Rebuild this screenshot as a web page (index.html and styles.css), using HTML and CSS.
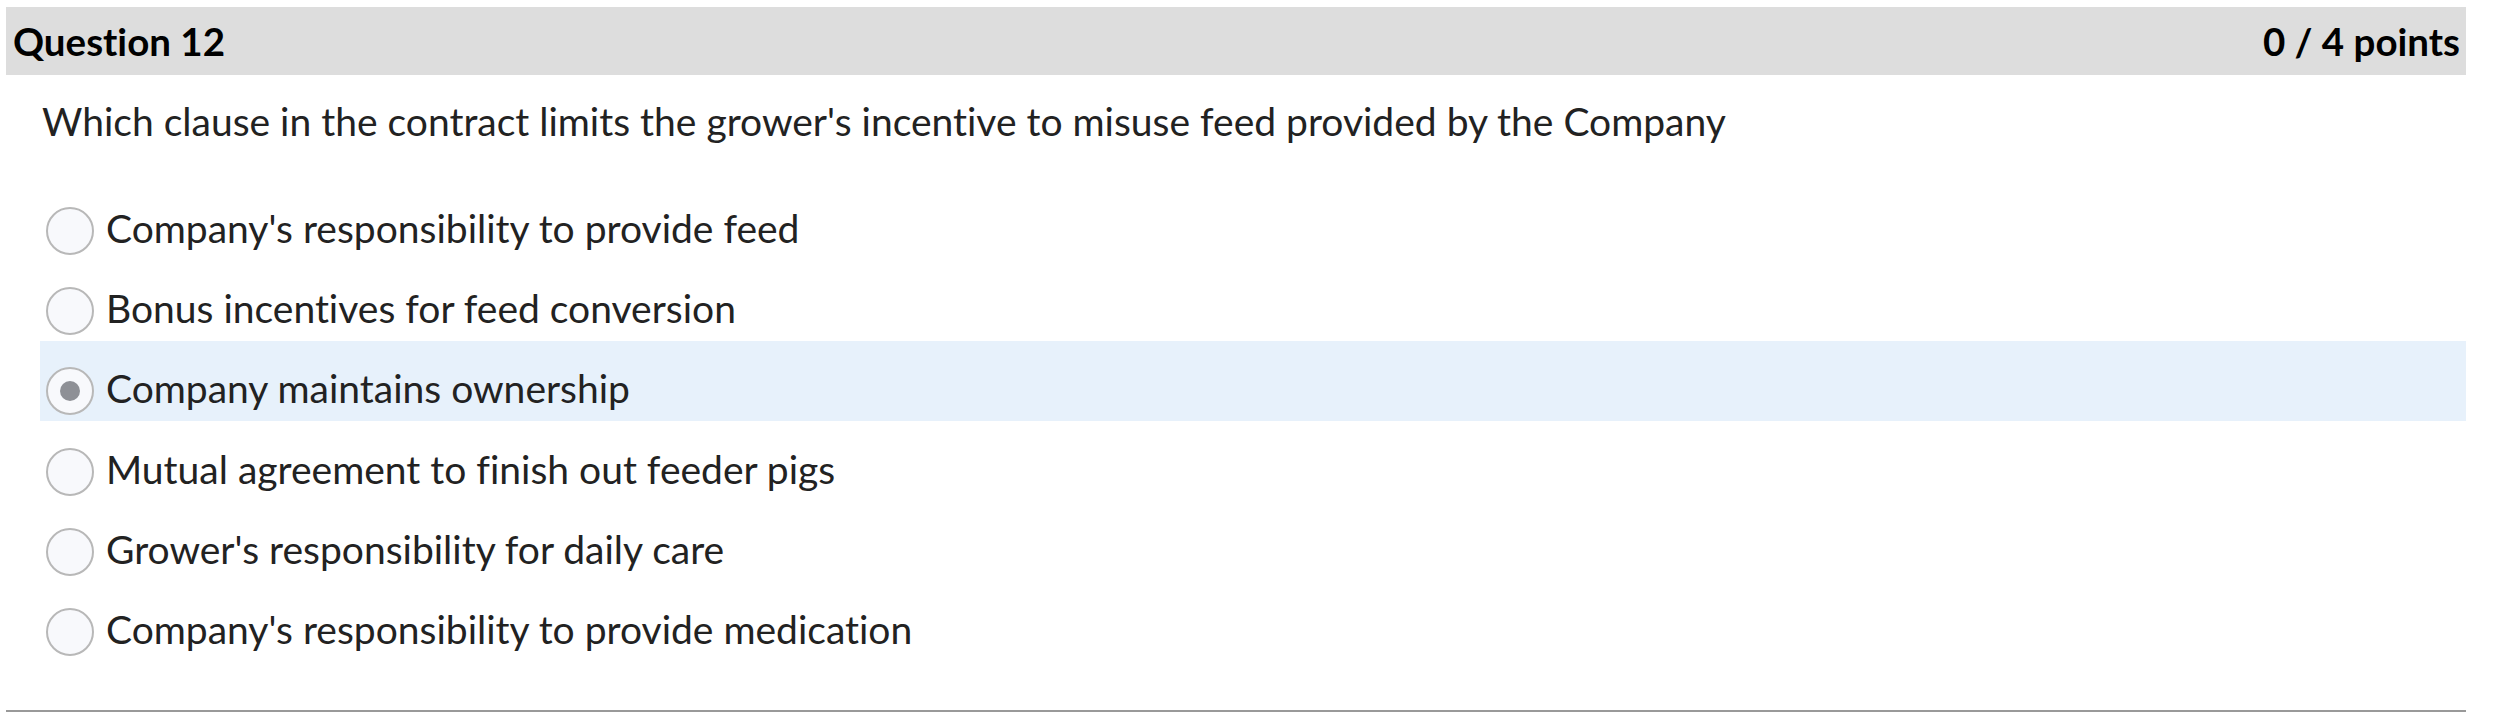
FILE: index.html
```html
<!DOCTYPE html>
<html lang="en">
<head>
<meta charset="utf-8">
<title>Question 12</title>
<link rel="stylesheet" href="styles.css">
</head>
<body>
<div class="question">
  <div class="q-header">
    <span class="q-title">Question 12</span>
    <span class="q-points">0 / 4 points</span>
  </div>
  <div class="q-body">
    <p class="q-text">Which clause in the contract limits the grower's incentive to misuse feed provided by the Company</p>
    <div class="options">
      <label class="option"><span class="radio"></span><span class="opt-text">Company's responsibility to provide feed</span></label>
      <label class="option"><span class="radio"></span><span class="opt-text">Bonus incentives for feed conversion</span></label>
      <label class="option selected"><span class="radio checked"></span><span class="opt-text">Company maintains ownership</span></label>
      <label class="option"><span class="radio"></span><span class="opt-text">Mutual agreement to finish out feeder pigs</span></label>
      <label class="option"><span class="radio"></span><span class="opt-text">Grower's responsibility for daily care</span></label>
      <label class="option"><span class="radio"></span><span class="opt-text">Company's responsibility to provide medication</span></label>
    </div>
  </div>
</div>
</body>
</html>
```
FILE: styles.css
```css
html, body {
  margin: 0;
  padding: 0;
  background: #fff;
}
body {
  font-family: Lato, "Noto Sans", sans-serif;
  color: #222;
  font-variant-ligatures: none;
  font-feature-settings: "liga" 0, "clig" 0;
}
.question {
  margin: 7px 0 0 6px;
  width: 2460px;
  height: 705px;
  box-sizing: border-box;
  border-bottom: 2px solid #999;
}
.q-header {
  height: 68px;
  background: #dddddd;
  display: flex;
  justify-content: space-between;
  align-items: center;
  padding: 0 6px 0 7px;
  font-weight: 700;
  font-size: 38.5px;
  color: #000;
}
.q-body {
  padding: 0 0 0 34px;
}
.q-text {
  margin: 0;
  padding: 16px 0 0 2px;
  height: 105px;
  box-sizing: border-box;
  font-size: 39px;
  line-height: 60px;
}
.options {
  display: flex;
  flex-direction: column;
}
.option {
  height: 80.33px;
  box-sizing: border-box;
  padding: 21px 0 0 6px;
  display: flex;
  align-items: center;
  font-size: 39px;
}
.option.selected {
  background: #e7f1fb;
}
.radio {
  width: 48px;
  height: 48px;
  box-sizing: border-box;
  border: 2px solid #b8b8b8;
  border-radius: 50%;
  background: #f8f9fc;
  display: flex;
  align-items: center;
  justify-content: center;
  flex: none;
}
.radio.checked::after {
  content: "";
  width: 20px;
  height: 20px;
  border-radius: 50%;
  background: #8e9096;
}
.opt-text {
  margin-left: 12px;
  position: relative;
  top: -3px;
}
```
